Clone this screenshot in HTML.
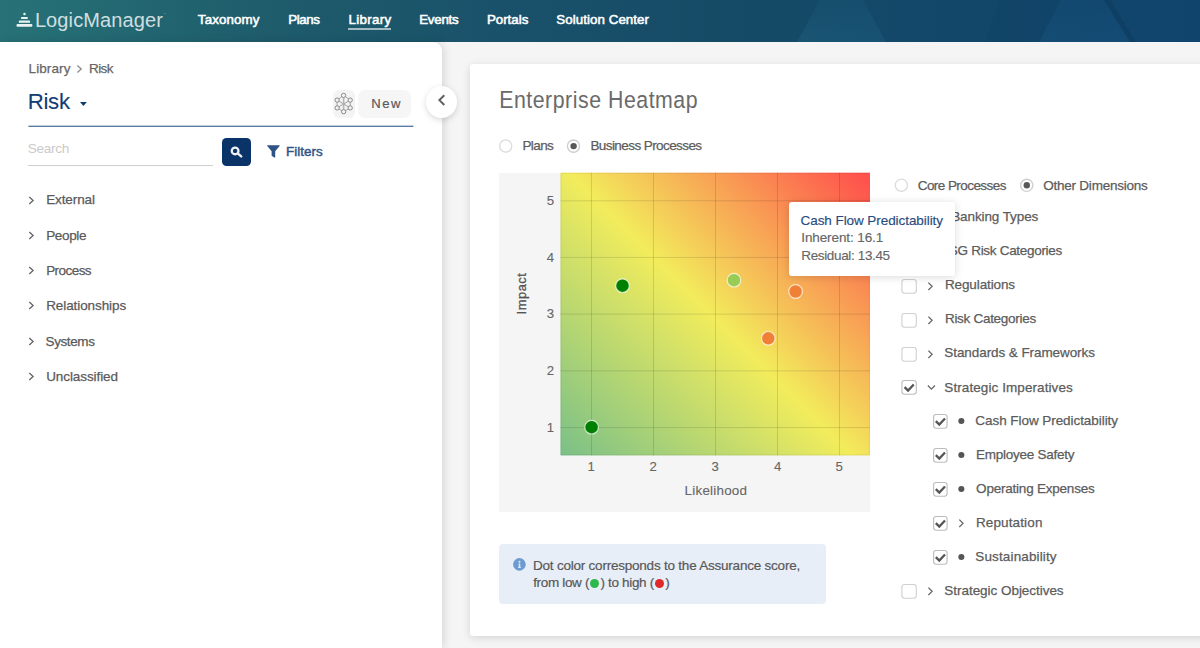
<!DOCTYPE html>
<html lang="en">
<head>
<meta charset="utf-8">
<title>LogicManager - Risk Library</title>
<style>
*{box-sizing:border-box;margin:0;padding:0}
html,body{width:1200px;height:648px;overflow:hidden;background:#f5f5f5;font-family:"Liberation Sans",sans-serif;font-size:13px;color:#5a5a5a}
.abs{position:absolute}
.x{position:absolute;white-space:nowrap;line-height:16px}
#header{position:absolute;left:0;top:0;width:1200px;height:42px;background:linear-gradient(to right,#277277 0%,#1e5b6b 23%,#19516a 42%,#164b66 60%,#12476a 80%,#10446d 100%);overflow:hidden}
#left{position:absolute;left:0;top:42px;width:442px;height:606px;background:#fff;border-top-right-radius:9px;box-shadow:2px 0 10px rgba(0,0,0,.13)}
#card{position:absolute;left:470px;top:64px;width:760px;height:572px;background:#fff;border-radius:3px;box-shadow:0 2px 8px rgba(0,0,0,.13)}
</style>
</head>
<body>
<div id="header">
  <svg class="abs" style="left:0;top:0" width="1200" height="42" viewBox="0 0 1200 42">
    <defs><linearGradient id="tg" x1="0" y1="0" x2="0" y2="1"><stop offset="0" stop-color="#2f8fb0" stop-opacity="0.07"/><stop offset="1" stop-color="#2f8fb0" stop-opacity="0.15"/></linearGradient>
    <linearGradient id="tg2" x1="0" y1="0" x2="0" y2="1"><stop offset="0" stop-color="#2a80c0" stop-opacity="0.05"/><stop offset="1" stop-color="#2a80c0" stop-opacity="0.1"/></linearGradient></defs>
    <polygon points="820,0 863,0 886,42 797,42" fill="url(#tg)"/>
    <polygon points="1061,0 1104,0 1130,42 1039,42" fill="url(#tg2)"/>
    <polygon points="1104,0 1110,0 1136,42 1130,42" fill="#000" opacity="0.08"/>
    <polygon points="1000,0 1061,0 1039,42 985,42" fill="#000" opacity="0.025"/>
  </svg>
  <svg class="abs" style="left:16px;top:12px" width="17" height="15" viewBox="0 0 17 15" fill="rgba(255,255,255,.9)">
    <circle cx="8.5" cy="2.1" r="1.25"/>
    <rect x="4.9" y="4.9" width="7" height="2.1" rx="0.9"/>
    <rect x="2.8" y="8.5" width="11.3" height="2.3" rx="0.9"/>
    <rect x="0.5" y="12.1" width="15.9" height="2.6" rx="1"/>
  </svg>
<div class="x" style="left:34.89px;top:12px;font-size:20px;letter-spacing:0.12px;color:rgba(255,255,255,.8);transform:scaleY(1.035);transform-origin:0 15px;">LogicManager</div>
<div class="x" style="left:163.6px;top:13px;font-size:2.4px;line-height:4px;color:rgba(255,255,255,.6)">&#8482;</div>
<div class="x" style="left:197.84px;top:12px;font-size:13.3px;letter-spacing:0.15px;color:#fff;-webkit-text-stroke:0.55px;">Taxonomy</div>
<div class="x" style="left:288.26px;top:12px;font-size:13.3px;letter-spacing:-0.38px;color:#fff;-webkit-text-stroke:0.55px;">Plans</div>
<div class="x" style="left:348.56px;top:12px;font-size:13.3px;letter-spacing:0.34px;color:#fff;-webkit-text-stroke:0.55px;">Library</div>
<div class="x" style="left:419.26px;top:12px;font-size:13.3px;letter-spacing:-0.26px;color:#fff;-webkit-text-stroke:0.55px;">Events</div>
<div class="x" style="left:486.96px;top:12px;font-size:13.3px;letter-spacing:-0.01px;color:#fff;-webkit-text-stroke:0.55px;">Portals</div>
<div class="x" style="left:556.35px;top:12px;font-size:13.3px;letter-spacing:0.07px;color:#fff;-webkit-text-stroke:0.55px;">Solution Center</div>
<div class="abs" style="left:348px;top:28px;width:43px;height:2px;background:#a2bac1"></div>
</div>
<div id="card"></div>
<div id="left"></div>
<div class="x" style="left:28.52px;top:61px;font-size:13.5px;letter-spacing:0.11px;color:#666;-webkit-text-stroke:0.25px;">Library</div>
<div class="x" style="left:89.03px;top:61px;font-size:13.5px;letter-spacing:-0.61px;color:#666;-webkit-text-stroke:0.25px;">Risk</div>
<svg class="abs" style="left:76px;top:65px" width="7" height="9" viewBox="0 0.5 7 9"><path d="M1.4 1 L5.2 4.5 L1.4 8" fill="none" stroke="#8a8a8a" stroke-width="1.3"/></svg>
<div class="x" style="left:27.78px;top:94px;font-size:22.2px;letter-spacing:-0.3px;color:#123d76;-webkit-text-stroke:0.1px;">Risk</div>
<svg class="abs" style="left:79px;top:101px" width="9" height="6" viewBox="0 0 9 6"><path d="M1 1.1 H7.8 L4.4 4.9 Z" fill="#0e3a72"/></svg>
<div class="abs" style="left:333px;top:90px;width:22px;height:28px;border-radius:6px;background:#f4f4f4"></div>
<div class="abs" style="left:358px;top:90px;width:53px;height:28px;border-radius:7px;background:#f6f6f6"></div>
<svg class="abs" style="left:330px;top:88px" width="30" height="32" viewBox="330 88 30 32" fill="none" stroke="#8a8a8a" stroke-width="1"><circle cx="343.6" cy="95.4" r="2.15"/><circle cx="350.2" cy="100.1" r="2.15"/><circle cx="350.2" cy="107.9" r="2.15"/><circle cx="343.6" cy="111.7" r="2.15"/><circle cx="337.1" cy="107.9" r="2.15"/><circle cx="337.1" cy="100.1" r="2.15"/><path d="M345.35 96.65 L348.45 98.85 M350.20 102.25 L350.20 105.75 M348.34 108.97 L345.46 110.63 M341.74 110.61 L338.96 108.99 M337.10 105.75 L337.10 102.25 M338.84 98.84 L341.86 96.66 M343.60 97.55 L343.60 109.55 M348.35 101.20 L338.95 106.80 M348.35 106.80 L338.95 101.20" stroke-width="0.8"/><path d="M343.60 97.55 L343.60 109.55" stroke-width="1.5" stroke="#b4b4b4"/></svg>
<div class="x" style="left:371.32px;top:96px;font-size:13.1px;letter-spacing:1.47px;color:#595959;-webkit-text-stroke:0.2px;">New</div>
<svg class="abs" style="left:0;top:120px" width="442" height="12" viewBox="0 120 442 12"><rect x="28.4" y="125.65" width="385" height="1.3" fill="#52739f"/></svg>
<div class="x" style="left:27.82px;top:141px;font-size:13.5px;letter-spacing:-0.27px;color:#cacaca;">Search</div>
<div class="abs" style="left:28px;top:165px;width:185px;height:1px;background:#cfcfcf"></div>
<div class="abs" style="left:222px;top:138px;width:29px;height:28px;border-radius:4.5px;background:#0a3368"></div>
<svg class="abs" style="left:230px;top:146px" width="13" height="12" viewBox="0 0 13 12"><circle cx="5.1" cy="4.9" r="3.35" fill="none" stroke="#eef1f5" stroke-width="2.3"/><path d="M8 7.7 L11.2 10.4" stroke="#eef1f5" stroke-width="2.4" stroke-linecap="round"/></svg>
<svg class="abs" style="left:267px;top:144.7px" width="13" height="13" viewBox="0 0 13 13"><path d="M0.6 0.2 H12.3 Q13.2 0.3 12.6 1.1 L8.2 6.3 V12.3 Q8.1 13 7.4 12.6 L4.9 10.9 Q4.6 10.7 4.6 10.3 V6.3 L0.3 1.1 Q-0.3 0.3 0.6 0.2 Z" fill="#2e5386"/></svg>
<div class="x" style="left:286.05px;top:144px;font-size:13.4px;letter-spacing:0.03px;color:#2f5487;-webkit-text-stroke:0.45px;">Filters</div>
<div class="x" style="left:46.13px;top:192px;font-size:13.5px;letter-spacing:-0.1px;color:#5a5a5a;-webkit-text-stroke:0.25px;">External</div>
<svg class="abs" style="left:28px;top:195.5px" width="7" height="9" viewBox="0 0 7 9"><path d="M1.3 0.9 L5.1 4.5 L1.3 8.1" fill="none" stroke="#666" stroke-width="1.35"/></svg>
<div class="x" style="left:46.13px;top:228px;font-size:13.5px;letter-spacing:-0.32px;color:#5a5a5a;-webkit-text-stroke:0.25px;">People</div>
<svg class="abs" style="left:28px;top:230.8px" width="7" height="9" viewBox="0 0 7 9"><path d="M1.3 0.9 L5.1 4.5 L1.3 8.1" fill="none" stroke="#666" stroke-width="1.35"/></svg>
<div class="x" style="left:46.13px;top:263px;font-size:13.5px;letter-spacing:-0.55px;color:#5a5a5a;-webkit-text-stroke:0.25px;">Process</div>
<svg class="abs" style="left:28px;top:266.1px" width="7" height="9" viewBox="0 0 7 9"><path d="M1.3 0.9 L5.1 4.5 L1.3 8.1" fill="none" stroke="#666" stroke-width="1.35"/></svg>
<div class="x" style="left:46.13px;top:298px;font-size:13.5px;letter-spacing:-0.08px;color:#5a5a5a;-webkit-text-stroke:0.25px;">Relationships</div>
<svg class="abs" style="left:28px;top:301.4px" width="7" height="9" viewBox="0 0 7 9"><path d="M1.3 0.9 L5.1 4.5 L1.3 8.1" fill="none" stroke="#666" stroke-width="1.35"/></svg>
<div class="x" style="left:45.53px;top:334px;font-size:13.5px;letter-spacing:-0.39px;color:#5a5a5a;-webkit-text-stroke:0.25px;">Systems</div>
<svg class="abs" style="left:28px;top:336.7px" width="7" height="9" viewBox="0 0 7 9"><path d="M1.3 0.9 L5.1 4.5 L1.3 8.1" fill="none" stroke="#666" stroke-width="1.35"/></svg>
<div class="x" style="left:46.14px;top:369px;font-size:13.5px;letter-spacing:-0.08px;color:#5a5a5a;-webkit-text-stroke:0.25px;">Unclassified</div>
<svg class="abs" style="left:28px;top:372.0px" width="7" height="9" viewBox="0 0 7 9"><path d="M1.3 0.9 L5.1 4.5 L1.3 8.1" fill="none" stroke="#666" stroke-width="1.35"/></svg>
<div class="abs" style="left:426px;top:86px;width:31px;height:32px;border-radius:50%;background:#fff;box-shadow:0 2px 6px rgba(0,0,0,.15)"></div>
<svg class="abs" style="left:437px;top:94px" width="9" height="12" viewBox="0 0 9 12"><path d="M7.3 1.2 L2.4 6.1 L7.3 11" fill="none" stroke="#606060" stroke-width="2"/></svg>
<div class="x" style="left:499.18px;top:93px;font-size:21.3px;letter-spacing:0.53px;color:#6a6a6a;transform:scaleY(1.085);transform-origin:0 15px;">Enterprise Heatmap</div>
<div class="x" style="left:522.43px;top:138px;font-size:13.5px;letter-spacing:-0.59px;color:#5c5c5c;-webkit-text-stroke:0.25px;">Plans</div>
<div class="x" style="left:590.43px;top:138px;font-size:13.5px;letter-spacing:-0.58px;color:#5c5c5c;-webkit-text-stroke:0.25px;">Business Processes</div>
<div class="abs" style="left:499px;top:173px;width:371px;height:339px;background:#f5f5f5"></div>
<svg class="abs" style="left:499px;top:172px" width="372" height="341" viewBox="499 172 372 341">
<defs><linearGradient id="hm" gradientUnits="userSpaceOnUse" x1="560.5" y1="455.4" x2="851.5" y2="164.4"><stop offset="0" stop-color="#7ac088"/><stop offset="0.5" stop-color="#f2ec5c"/><stop offset="1" stop-color="#ff514d"/></linearGradient></defs>
<rect x="560.5" y="172.7" width="309.4" height="282.7" fill="url(#hm)"/>
<rect x="561" y="173.2" width="308.4" height="281.7" fill="none" stroke="rgba(0,0,0,0.07)" stroke-width="1"/>
<line x1="591.5" y1="172.7" x2="591.5" y2="455.4" stroke="rgba(0,0,0,0.125)" stroke-width="1"/>
<line x1="653.5" y1="172.7" x2="653.5" y2="455.4" stroke="rgba(0,0,0,0.125)" stroke-width="1"/>
<line x1="715.5" y1="172.7" x2="715.5" y2="455.4" stroke="rgba(0,0,0,0.125)" stroke-width="1"/>
<line x1="777.5" y1="172.7" x2="777.5" y2="455.4" stroke="rgba(0,0,0,0.125)" stroke-width="1"/>
<line x1="839.5" y1="172.7" x2="839.5" y2="455.4" stroke="rgba(0,0,0,0.125)" stroke-width="1"/>
<line x1="560.5" y1="427.6" x2="869.9" y2="427.55" stroke="rgba(0,0,0,0.12)" stroke-width="1"/>
<line x1="560.5" y1="370.9" x2="869.9" y2="370.85" stroke="rgba(0,0,0,0.12)" stroke-width="1"/>
<line x1="560.5" y1="314.1" x2="869.9" y2="314.15" stroke="rgba(0,0,0,0.12)" stroke-width="1"/>
<line x1="560.5" y1="257.4" x2="869.9" y2="257.45" stroke="rgba(0,0,0,0.12)" stroke-width="1"/>
<line x1="560.5" y1="200.8" x2="869.9" y2="200.75" stroke="rgba(0,0,0,0.12)" stroke-width="1"/>
<circle cx="591.6" cy="427.2" r="6.8" fill="#008000" stroke="rgba(255,255,255,0.7)" stroke-width="1.2"/>
<circle cx="622.5" cy="285.7" r="6.8" fill="#008000" stroke="rgba(255,255,255,0.7)" stroke-width="1.2"/>
<circle cx="734" cy="280.2" r="6.8" fill="#99cc55" stroke="rgba(255,255,255,0.7)" stroke-width="1.2"/>
<circle cx="795.6" cy="291.5" r="6.8" fill="#ef8035" stroke="rgba(255,255,255,0.7)" stroke-width="1.2"/>
<circle cx="768.3" cy="338.3" r="6.8" fill="#ef8035" stroke="rgba(255,255,255,0.7)" stroke-width="1.2"/>
</svg>
<div class="x" style="left:587.53px;top:459px;font-size:13.2px;letter-spacing:0.0px;color:#666;-webkit-text-stroke:0.1px;">1</div>
<div class="x" style="left:546.82px;top:420px;font-size:13.2px;letter-spacing:0.0px;color:#666;-webkit-text-stroke:0.1px;">1</div>
<div class="x" style="left:649.56px;top:459px;font-size:13.2px;letter-spacing:0.0px;color:#666;-webkit-text-stroke:0.1px;">2</div>
<div class="x" style="left:546.83px;top:363px;font-size:13.2px;letter-spacing:0.0px;color:#666;-webkit-text-stroke:0.1px;">2</div>
<div class="x" style="left:711.53px;top:459px;font-size:13.2px;letter-spacing:0.0px;color:#666;-webkit-text-stroke:0.1px;">3</div>
<div class="x" style="left:546.82px;top:306px;font-size:13.2px;letter-spacing:0.0px;color:#666;-webkit-text-stroke:0.1px;">3</div>
<div class="x" style="left:773.94px;top:459px;font-size:13.2px;letter-spacing:0.0px;color:#666;-webkit-text-stroke:0.1px;">4</div>
<div class="x" style="left:546.74px;top:250px;font-size:13.2px;letter-spacing:0.0px;color:#666;-webkit-text-stroke:0.1px;">4</div>
<div class="x" style="left:835.52px;top:459px;font-size:13.2px;letter-spacing:0.0px;color:#666;-webkit-text-stroke:0.1px;">5</div>
<div class="x" style="left:546.8px;top:193px;font-size:13.2px;letter-spacing:0.0px;color:#666;-webkit-text-stroke:0.1px;">5</div>
<div class="x" style="left:684.61px;top:483px;font-size:13.4px;letter-spacing:0.23px;color:#666;-webkit-text-stroke:0.1px;">Likelihood</div>
<div class="x" style="left:0;top:0;font-size:12.9px;letter-spacing:0.51px;color:#555;-webkit-text-stroke:0.3px;transform-origin:0 0;transform:translate(513.6px,314.39px) rotate(-90deg)">Impact</div>
<div class="x" style="left:917.75px;top:178px;font-size:13.5px;letter-spacing:-0.57px;color:#5c5c5c;-webkit-text-stroke:0.25px;">Core Processes</div>
<div class="x" style="left:1043.22px;top:178px;font-size:13.5px;letter-spacing:-0.23px;color:#5c5c5c;-webkit-text-stroke:0.25px;">Other Dimensions</div>
<div class="x" style="left:951.13px;top:209px;font-size:13.5px;letter-spacing:-0.09px;color:#5c5c5c;-webkit-text-stroke:0.25px;">Banking Types</div>
<div class="x" style="left:940.13px;top:243px;font-size:13.5px;letter-spacing:-0.3px;color:#5c5c5c;-webkit-text-stroke:0.25px;">ESG Risk Categories</div>
<div class="x" style="left:944.93px;top:277px;font-size:13.5px;letter-spacing:-0.11px;color:#5c5c5c;-webkit-text-stroke:0.25px;">Regulations</div>
<div class="x" style="left:944.93px;top:311px;font-size:13.5px;letter-spacing:-0.29px;color:#5c5c5c;-webkit-text-stroke:0.25px;">Risk Categories</div>
<div class="x" style="left:944.33px;top:345px;font-size:13.5px;letter-spacing:-0.08px;color:#5c5c5c;-webkit-text-stroke:0.25px;">Standards &amp; Frameworks</div>
<div class="x" style="left:944.33px;top:380px;font-size:13.5px;letter-spacing:0.08px;color:#5c5c5c;-webkit-text-stroke:0.25px;">Strategic Imperatives</div>
<div class="x" style="left:975.35px;top:413px;font-size:13.5px;letter-spacing:-0.06px;color:#5c5c5c;-webkit-text-stroke:0.25px;">Cash Flow Predictability</div>
<div class="x" style="left:975.93px;top:447px;font-size:13.5px;letter-spacing:-0.25px;color:#5c5c5c;-webkit-text-stroke:0.25px;">Employee Safety</div>
<div class="x" style="left:976.12px;top:481px;font-size:13.5px;letter-spacing:-0.22px;color:#5c5c5c;-webkit-text-stroke:0.25px;">Operating Expenses</div>
<div class="x" style="left:975.93px;top:515px;font-size:13.5px;letter-spacing:0.13px;color:#5c5c5c;-webkit-text-stroke:0.25px;">Reputation</div>
<div class="x" style="left:975.33px;top:549px;font-size:13.5px;letter-spacing:0.13px;color:#5c5c5c;-webkit-text-stroke:0.25px;">Sustainability</div>
<div class="x" style="left:944.33px;top:583px;font-size:13.5px;letter-spacing:-0.04px;color:#5c5c5c;-webkit-text-stroke:0.25px;">Strategic Objectives</div>
<svg class="abs" style="left:0;top:0" width="1200" height="648" viewBox="0 0 1200 648">
<rect x="901.90" y="211.50" width="14.40" height="13.7" rx="2.6" fill="#fff" stroke="#d0d0d0" stroke-width="1.1"/>
<path d="M928.40 214.65 L932.10 218.35 L928.40 222.05" fill="none" stroke="#666" stroke-width="1.3"/>
<rect x="901.90" y="245.50" width="14.40" height="13.7" rx="2.6" fill="#fff" stroke="#d0d0d0" stroke-width="1.1"/>
<path d="M928.40 248.65 L932.10 252.35 L928.40 256.05" fill="none" stroke="#666" stroke-width="1.3"/>
<rect x="901.90" y="279.50" width="14.40" height="13.7" rx="2.6" fill="#fff" stroke="#d0d0d0" stroke-width="1.1"/>
<path d="M928.40 282.65 L932.10 286.35 L928.40 290.05" fill="none" stroke="#666" stroke-width="1.3"/>
<rect x="901.90" y="313.50" width="14.40" height="13.7" rx="2.6" fill="#fff" stroke="#d0d0d0" stroke-width="1.1"/>
<path d="M928.40 316.65 L932.10 320.35 L928.40 324.05" fill="none" stroke="#666" stroke-width="1.3"/>
<rect x="901.90" y="347.50" width="14.40" height="13.7" rx="2.6" fill="#fff" stroke="#d0d0d0" stroke-width="1.1"/>
<path d="M928.40 350.65 L932.10 354.35 L928.40 358.05" fill="none" stroke="#666" stroke-width="1.3"/>
<rect x="901.90" y="380.50" width="14.40" height="13.7" rx="2.6" fill="#fff" stroke="#bbbdbd" stroke-width="1.1"/><path d="M904.55 387.10 L908.05 390.50 L913.75 384.50" fill="none" stroke="#555" stroke-width="2.3" stroke-linejoin="miter"/>
<path d="M927.90 385.45 L931.40 389.15 L934.90 385.45" fill="none" stroke="#666" stroke-width="1.3"/>
<rect x="933.60" y="414.50" width="13.50" height="13.7" rx="2.6" fill="#fff" stroke="#bbbdbd" stroke-width="1.1"/><path d="M935.80 421.10 L939.30 424.50 L945.00 418.50" fill="none" stroke="#555" stroke-width="2.3" stroke-linejoin="miter"/>
<circle cx="961.35" cy="420.95" r="3.05" fill="#555"/>
<rect x="933.60" y="448.50" width="13.50" height="13.7" rx="2.6" fill="#fff" stroke="#bbbdbd" stroke-width="1.1"/><path d="M935.80 455.10 L939.30 458.50 L945.00 452.50" fill="none" stroke="#555" stroke-width="2.3" stroke-linejoin="miter"/>
<circle cx="961.35" cy="454.95" r="3.05" fill="#555"/>
<rect x="933.60" y="482.50" width="13.50" height="13.7" rx="2.6" fill="#fff" stroke="#bbbdbd" stroke-width="1.1"/><path d="M935.80 489.10 L939.30 492.50 L945.00 486.50" fill="none" stroke="#555" stroke-width="2.3" stroke-linejoin="miter"/>
<circle cx="961.35" cy="488.95" r="3.05" fill="#555"/>
<rect x="933.60" y="516.50" width="13.50" height="13.7" rx="2.6" fill="#fff" stroke="#bbbdbd" stroke-width="1.1"/><path d="M935.80 523.10 L939.30 526.50 L945.00 520.50" fill="none" stroke="#555" stroke-width="2.3" stroke-linejoin="miter"/>
<path d="M959.30 519.65 L963.00 523.35 L959.30 527.05" fill="none" stroke="#666" stroke-width="1.3"/>
<rect x="933.60" y="550.50" width="13.50" height="13.7" rx="2.6" fill="#fff" stroke="#bbbdbd" stroke-width="1.1"/><path d="M935.80 557.10 L939.30 560.50 L945.00 554.50" fill="none" stroke="#555" stroke-width="2.3" stroke-linejoin="miter"/>
<circle cx="961.35" cy="556.95" r="3.05" fill="#555"/>
<rect x="901.90" y="584.50" width="14.40" height="13.7" rx="2.6" fill="#fff" stroke="#d0d0d0" stroke-width="1.1"/>
<path d="M928.40 587.65 L932.10 591.35 L928.40 595.05" fill="none" stroke="#666" stroke-width="1.3"/>
<circle cx="901.4" cy="185.2" r="6.1" fill="#fff" stroke="#dcdcdc" stroke-width="1.35"/>
<circle cx="1026.7" cy="185.3" r="6.1" fill="#fff" stroke="#cdcfcf" stroke-width="1.35"/><circle cx="1026.8" cy="185.3" r="3.2" fill="#585858"/>
<circle cx="505.7" cy="146.0" r="6.1" fill="#fff" stroke="#dcdcdc" stroke-width="1.35"/>
<circle cx="573.5" cy="146.1" r="6.1" fill="#fff" stroke="#cdcfcf" stroke-width="1.35"/><circle cx="573.6" cy="146.1" r="3.2" fill="#585858"/>
</svg>
<div class="abs" style="left:789px;top:202px;width:166px;height:74px;background:#fff;border-radius:3px;box-shadow:0 1px 8px rgba(0,0,0,.15)"></div>
<div class="x" style="left:800.55px;top:213px;font-size:13.5px;letter-spacing:-0.07px;color:#274c7f;-webkit-text-stroke:0.15px;">Cash Flow Predictability</div>
<div class="x" style="left:801.26px;top:230px;font-size:13.5px;letter-spacing:-0.1px;color:#666;-webkit-text-stroke:0.15px;">Inherent: 16.1</div>
<div class="x" style="left:801.31px;top:248px;font-size:13.5px;letter-spacing:-0.36px;color:#666;-webkit-text-stroke:0.15px;">Residual: 13.45</div>
<div class="abs" style="left:499px;top:544px;width:327px;height:59.7px;background:#e8eef7;border-radius:4px"></div>
<svg class="abs" style="left:513px;top:557px" width="13" height="14" viewBox="0 0 13 14"><circle cx="6.4" cy="7.4" r="6.3" fill="#6c9bd1"/><path d="M5.4 6.5 H7.3 V10 H7.9 V10.9 H5.1 V10 H5.7 V7.3 H5.4 Z" fill="#dde9f5"/><circle cx="6.5" cy="4.7" r="1" fill="#dde9f5"/></svg>
<div class="x" style="left:533.01px;top:558px;font-size:13.5px;letter-spacing:-0.22px;color:#585858;-webkit-text-stroke:0.2px;">Dot color corresponds to the Assurance score,</div>
<div class="x" style="left:533.15px;top:575px;font-size:13.5px;letter-spacing:-0.33px;color:#585858;-webkit-text-stroke:0.2px;">from low (<span style="display:inline-block;width:9px;height:9px;border-radius:50%;margin:0 1.2px;vertical-align:-0.6px;letter-spacing:0;background:#2db84b"></span>) to high (<span style="display:inline-block;width:9px;height:9px;border-radius:50%;margin:0 1.2px;vertical-align:-0.6px;letter-spacing:0;background:#e0282b"></span>)</div>
</body>
</html>
